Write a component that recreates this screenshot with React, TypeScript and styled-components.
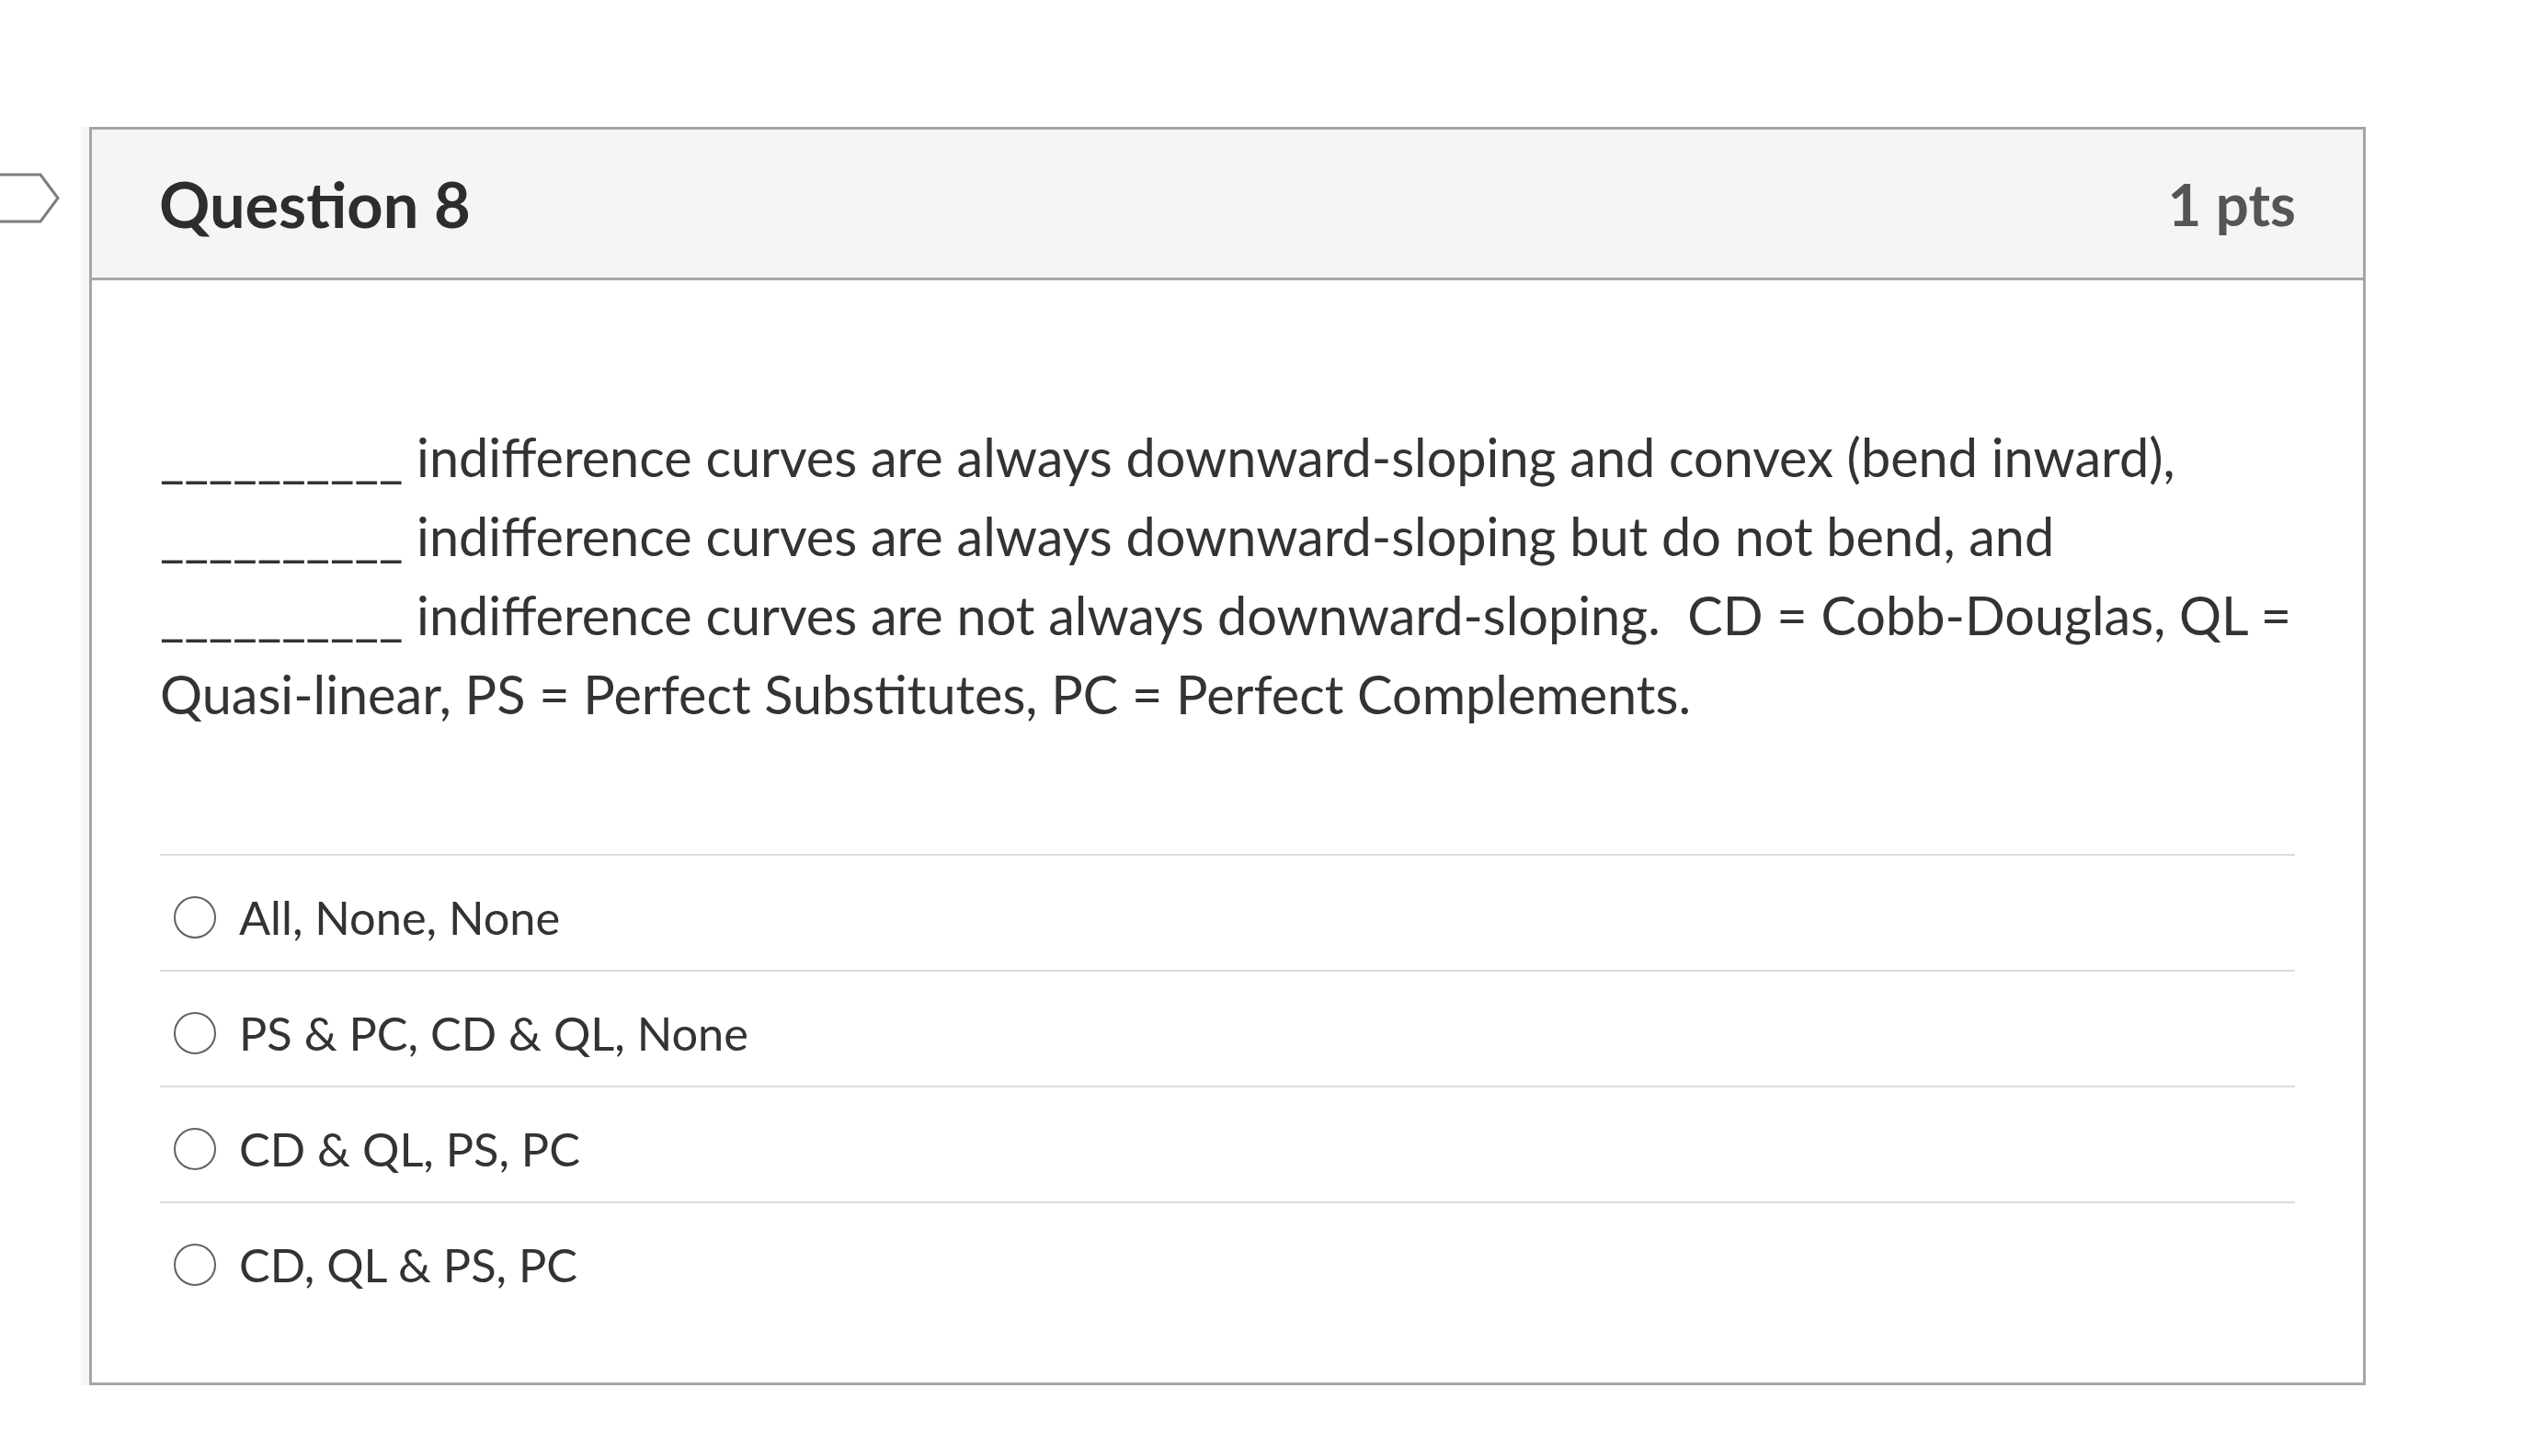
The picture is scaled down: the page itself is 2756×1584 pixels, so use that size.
import styled, {createGlobalStyle} from "styled-components";

const GlobalStyle = createGlobalStyle`
  html, body {
    margin: 0;
    padding: 0;
    background: #ffffff;
  }
  body {
    font-family: Lato, "Open Sans", "Liberation Sans", sans-serif;
    color: #333333;
  }
`

const Page = styled.div`
  display: flex;
  align-items: flex-start;
  padding-top: 138px;
  padding-bottom: 78px;
`

const Gutter = styled.div`
  width: 97px;
  flex-shrink: 0;
  padding-top: 50px;
`

const Card = styled.div`
  width: 2476px;
  box-sizing: border-box;
  border: 3px solid #a6a6a6;
  background: #ffffff;
  box-shadow: -9px 0 0 #f7f7f7;
`

const Header = styled.div`
  display: flex;
  justify-content: space-between;
  align-items: center;
  height: 161px;
  padding: 0 73px;
  background: #f5f5f5;
  border-bottom: 3px solid #a6a6a6;
`

const Title = styled.h2`
  margin: 0;
  font-family: Lato, sans-serif;
  font-weight: 700;
  font-size: 68.5px;
  color: #2d2d2d;
`

const Points = styled.div`
  font-family: Lato, sans-serif;
  font-weight: 700;
  font-size: 63.5px;
  color: #555555;
`

const Body = styled.div`
  padding: 149px 74px 71px;
`

const QuestionText = styled.p`
  margin: 0 0 131px;
  font-size: 57.6px;
  line-height: 86px;
  color: #333333;
`

const Answers = styled.div`
  display: flex;
  flex-direction: column;
`

const AnswerRow = styled.label`
  display: flex;
  align-items: center;
  gap: 25px;
  height: 126px;
  box-sizing: border-box;
  padding: 9px 0 0 15px;
  border-top: 2px solid #dcdcdc;
`

const Radio = styled.span`
  width: 46px;
  height: 46px;
  box-sizing: border-box;
  border-radius: 50%;
  border: 2.5px solid #606060;
  background: #ffffff;
  flex-shrink: 0;
`

const AnswerLabel = styled.span`
  font-size: 50.5px;
  color: #333333;
`

function Flag() {
    return (
        <svg width="66" height="58" viewBox="0 0 66 58">
            <path d="M -4 2 H 44 L 63 27.5 L 44 53 H -4" fill="#ffffff" stroke="#7d7d7d" strokeWidth="3" strokeLinejoin="miter"/>
        </svg>
    )
}

const answers = [
    "All, None, None",
    "PS & PC, CD & QL, None",
    "CD & QL, PS, PC",
    "CD, QL & PS, PC",
]

export default function App() {
    return <>
        <GlobalStyle/>
        <Page>
            <Gutter>
                <Flag/>
            </Gutter>
            <Card>
                <Header>
                    <Title>Question 8</Title>
                    <Points>1 pts</Points>
                </Header>
                <Body>
                    <QuestionText>
                        __________ indifference curves are always downward-sloping and convex (bend inward),<br/>
                        __________ indifference curves are always downward-sloping but do not bend, and<br/>
                        __________ indifference curves are not always downward-sloping.{"\u00a0"} CD = Cobb-Douglas, QL = Quasi-linear, PS = Perfect Substitutes, PC = Perfect Complements.
                    </QuestionText>
                    <Answers>
                        {answers.map(a => (
                            <AnswerRow key={a}>
                                <Radio/>
                                <AnswerLabel>{a}</AnswerLabel>
                            </AnswerRow>
                        ))}
                    </Answers>
                </Body>
            </Card>
        </Page>
    </>
}
